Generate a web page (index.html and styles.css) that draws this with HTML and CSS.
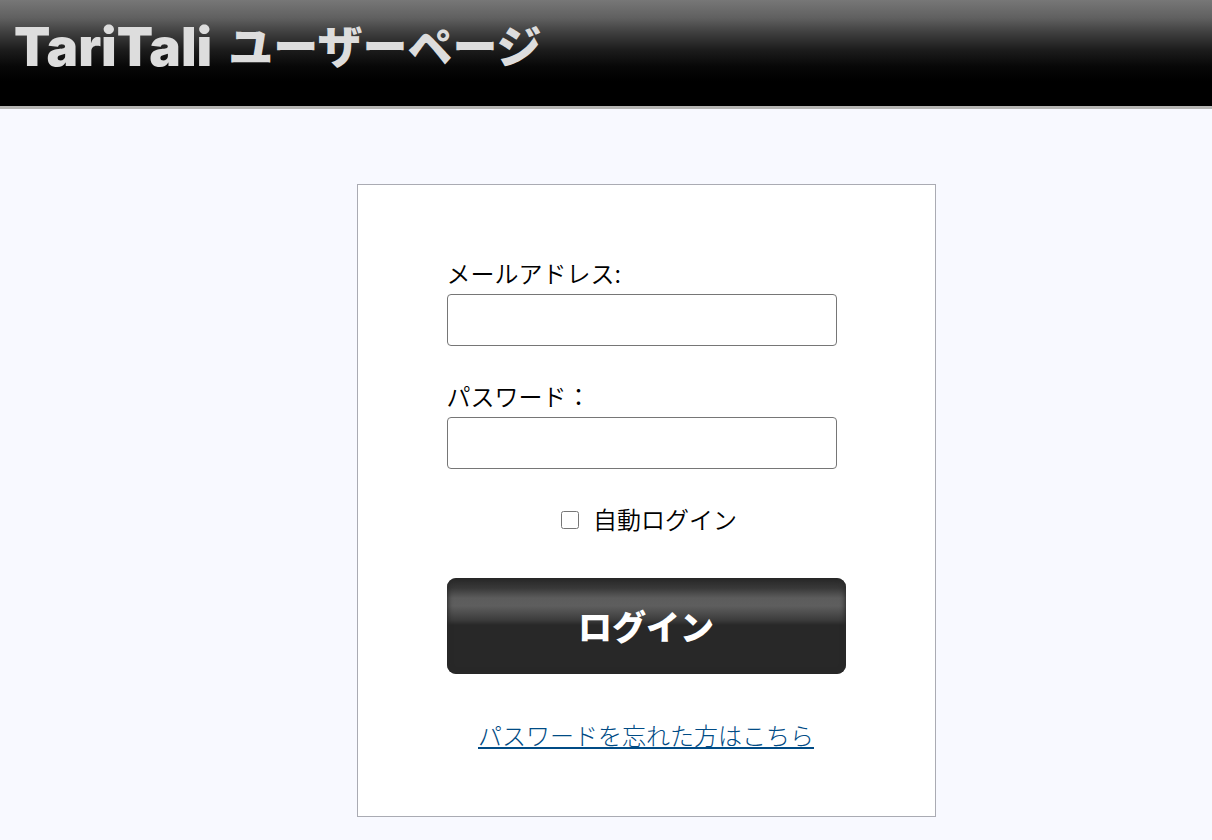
FILE: index.html
```html
<!DOCTYPE html>
<html lang="ja">
  <head>
    <meta charset="UTF-8">
    <title>TariTali ユーザーページ</title>
    <link rel="stylesheet" href="styles.css">
  </head>
  <body>
    <header class="header">
      <h1><span class="brand">TariTali</span><span>ユーザーページ</span></h1>
    </header>
    <main class="main">
      <form class="login">
        <div class="field">
          <label for="email">メールアドレス:</label>
          <input type="email" id="email" name="email">
        </div>
        <div class="field">
          <label for="password">パスワード：</label>
          <input type="password" id="password" name="password">
        </div>
        <div class="auto-login">
          <input type="checkbox" id="auto" name="auto">
          <label for="auto">自動ログイン</label>
        </div>
        <button type="submit" class="login-button">ログイン</button>
        <a class="forgot" href="#">パスワードを忘れた方はこちら</a>
      </form>
    </main>
  </body>
</html>
```

FILE: styles.css
```css
* {
  box-sizing: border-box;
}
body {
  margin: 0;
  background-color: #f8f9ff;
  color: #000;
  font-family: "Noto Sans CJK JP", sans-serif;
  font-size: 24px;
  font-weight: 350;
  line-height: 38px;
}
/* Header bar */
.header {
  padding: 12px 14px 24px;
  background: linear-gradient(#777 0, #606060 18px, #404040 32px, #1c1c1c 50px, #080808 66px, #000 82px);
  border-bottom: 3px solid #b5b5b3;
}
h1 {
  display: flex;
  gap: 16px;
  margin: 0;
  color: #ddd;
  font-size: 45px;
  font-weight: 900;
  line-height: 66px;
}
.brand {
  font-family: Inter, "Liberation Sans", sans-serif;
  font-size: 53px;
  font-weight: 900;
  line-height: 70px;
}
/* Login box */
.main {
  padding: 75px 0 23px 80px;
}
.login {
  display: flex;
  flex-direction: column;
  max-width: 579px;
  margin: 0 auto;
  padding: 69px 89px 62px;
  background-color: #fff;
  border: 1px solid #aaabb3;
}
.field {
  display: flex;
  flex-direction: column;
  gap: 2px;
  margin-bottom: 31px;
}
.field input {
  width: calc(100% - 9px);
  height: 52px;
  padding: 4px 8px;
  background-color: #fff;
  border: 1px solid #767676;
  border-radius: 4px;
  font: inherit;
}
.auto-login {
  display: flex;
  justify-content: center;
  align-items: center;
  gap: 14px;
  margin-bottom: 40px;
  padding-left: 6px;
}
.auto-login input {
  width: 18px;
  height: 18px;
  margin: 2px 0 0;
}
.login-button {
  height: 96px;
  padding: 0 0 2px;
  border: none;
  border-radius: 9px;
  background: linear-gradient(#282828 0, #383838 10px, #5c5c5c 20px, #5e5e5e 28px, #3c3c3c 42px, #282828 47px);
  box-shadow: inset 0 0 5px 1px #282828;
  color: #fff;
  font-family: inherit;
  font-size: 34px;
  font-weight: 900;
  cursor: pointer;
}
.forgot {
  align-self: center;
  margin-top: 42px;
  color: #004b85;
  font-weight: 300;
  text-decoration-thickness: 2px;
  text-underline-offset: 2px;
}
```
